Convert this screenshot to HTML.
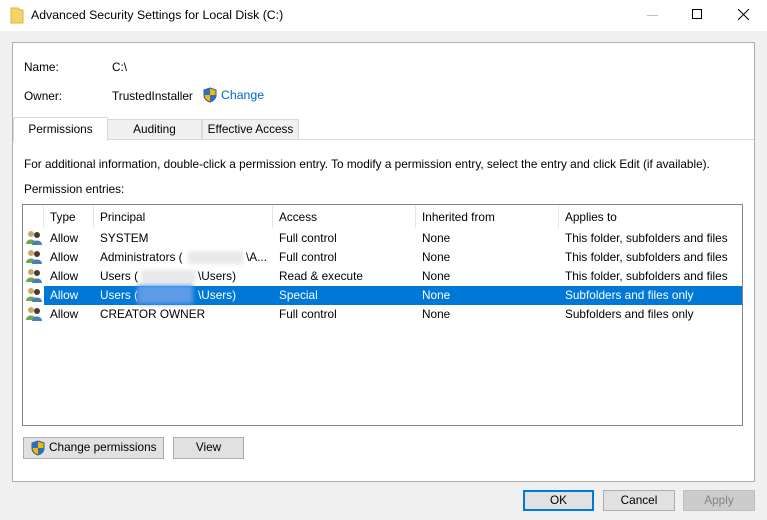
<!DOCTYPE html>
<html><head><style>
*{margin:0;padding:0;box-sizing:border-box}
body{width:767px;height:520px;background:#f0f0f0;font-family:"Liberation Sans",sans-serif;font-size:11.8px;color:#000;position:relative;overflow:hidden}
.a{position:absolute;white-space:nowrap}
.btn{position:absolute;background:#e1e1e1;border:1px solid #adadad;text-align:center;line-height:19px;white-space:nowrap}
.row{position:absolute;left:23px;width:719px;height:19px;line-height:19px;white-space:nowrap}
.row span{position:absolute;white-space:nowrap}
.blur{position:absolute;height:13px;background:#e8e8e8;filter:blur(2px)}
</style></head><body>
<div class="a" style="left:0;top:0;width:767px;height:31px;background:#fff"></div>
<svg class="a" style="left:10px;top:7px" width="14" height="17"><path d="M1 1h7l2 2h3v13H1z" fill="#f6d26b" stroke="#dcb345"/></svg>
<div class="a" style="left:31px;top:8px;font-size:12.3px">Advanced Security Settings for Local Disk (C:)</div>
<div class="a" style="left:647px;top:15px;width:11px;height:1px;background:#c0c0c0"></div>
<div class="a" style="left:692px;top:9px;width:10px;height:10px;border:1px solid #000"></div>
<svg class="a" style="left:738px;top:9px" width="11" height="11"><path d="M0 0L11 11M11 0L0 11" stroke="#000"/></svg>

<div class="a" style="left:12px;top:42px;width:743px;height:440px;background:#fff;border:1px solid #adadad"></div>
<div class="a" style="left:24px;top:60px">Name:</div>
<div class="a" style="left:112px;top:60px">C:\</div>
<div class="a" style="left:24px;top:89px">Owner:</div>
<div class="a" style="left:112px;top:89px">TrustedInstaller</div>
<svg class="a" style="left:203px;top:87px" width="14" height="16"><path d="M7 1L13 3V8C13 12 10 14 7 15C4 14 1 12 1 8V3Z" fill="#f5b800" stroke="#2a5a9a"/><path d="M7 1V8H1V3Z" fill="#2f6fc0"/><path d="M7 8H13C13 12 10 14 7 15Z" fill="#2f6fc0"/></svg>
<div class="a" style="left:221px;top:88px;color:#0066cc;font-size:12.3px">Change</div>

<div class="a" style="left:13px;top:139px;width:741px;height:1px;background:#d9d9d9"></div>
<div class="a" style="left:107px;top:119px;width:95px;height:20px;background:#f0f0f0;border:1px solid #d9d9d9;border-bottom:none;text-align:center;line-height:19px">Auditing</div>
<div class="a" style="left:202px;top:119px;width:97px;height:20px;background:#f0f0f0;border:1px solid #d9d9d9;border-bottom:none;text-align:center;line-height:19px">Effective Access</div>
<div class="a" style="left:13px;top:117px;width:95px;height:24px;background:#fff;border:1px solid #d9d9d9;border-bottom:none;text-align:center;line-height:23px">Permissions</div>

<div class="a" style="left:24px;top:157px">For additional information, double-click a permission entry. To modify a permission entry, select the entry and click Edit (if available).</div>
<div class="a" style="left:24px;top:182px">Permission entries:</div>

<div class="a" style="left:22px;top:204px;width:721px;height:222px;border:1px solid #828790;background:#fff"></div>
<div class="a" style="left:43px;top:205px;width:1px;height:23px;background:#e5e5e5"></div>
<div class="a" style="left:93px;top:205px;width:1px;height:23px;background:#e5e5e5"></div>
<div class="a" style="left:272px;top:205px;width:1px;height:23px;background:#e5e5e5"></div>
<div class="a" style="left:415px;top:205px;width:1px;height:23px;background:#e5e5e5"></div>
<div class="a" style="left:558px;top:205px;width:1px;height:23px;background:#e5e5e5"></div>
<div class="a" style="left:50px;top:210px">Type</div>
<div class="a" style="left:100px;top:210px">Principal</div>
<div class="a" style="left:279px;top:210px">Access</div>
<div class="a" style="left:422px;top:210px">Inherited from</div>
<div class="a" style="left:565px;top:210px">Applies to</div>

<div class="a" style="left:44px;top:286px;width:698px;height:19px;background:#0078d7"></div>

<div class="row" style="top:229px"><span style="left:27px">Allow</span><span style="left:77px">SYSTEM</span><span style="left:256px">Full control</span><span style="left:399px">None</span><span style="left:542px">This folder, subfolders and files</span></div>
<div class="row" style="top:248px"><span style="left:27px">Allow</span><span style="left:77px">Administrators (</span><i class="blur" style="left:165px;top:3px;width:56px"></i><span style="left:223px">\A...</span><span style="left:256px">Full control</span><span style="left:399px">None</span><span style="left:542px">This folder, subfolders and files</span></div>
<div class="row" style="top:267px"><span style="left:27px">Allow</span><span style="left:77px">Users (</span><i class="blur" style="left:118px;top:3px;width:55px"></i><span style="left:175px">\Users)</span><span style="left:256px">Read &amp; execute</span><span style="left:399px">None</span><span style="left:542px">This folder, subfolders and files</span></div>
<div class="row" style="top:286px;color:#fff"><span style="left:27px">Allow</span><span style="left:77px">Users (</span><i class="blur" style="left:114px;top:-1px;width:56px;height:19px;background:#5c9be6"></i><span style="left:175px">\Users)</span><span style="left:256px">Special</span><span style="left:399px">None</span><span style="left:542px">Subfolders and files only</span></div>
<div class="row" style="top:305px"><span style="left:27px">Allow</span><span style="left:77px">CREATOR OWNER</span><span style="left:256px">Full control</span><span style="left:399px">None</span><span style="left:542px">Subfolders and files only</span></div>

<svg class="a" style="left:26px;top:230px" width="17" height="95">
<g id="u"><circle cx="5" cy="4" r="3" fill="#c9a86a"/><path d="M0 14C0 8 10 8 10 14Z" fill="#6aa84f"/><circle cx="11" cy="5" r="3" fill="#4b3a2a"/><path d="M6 15C6 9 16 9 16 15Z" fill="#4a7fb5"/></g>
<use href="#u" y="19"/><use href="#u" y="38"/><use href="#u" y="57"/><use href="#u" y="76"/>
</svg>

<div class="btn" style="left:23px;top:437px;width:141px;height:22px;text-align:left;padding-left:25px">Change permissions</div>
<svg class="a" style="left:31px;top:440px" width="14" height="16"><path d="M7 1L13 3V8C13 12 10 14 7 15C4 14 1 12 1 8V3Z" fill="#f5b800" stroke="#2a5a9a"/><path d="M7 1V8H1V3Z" fill="#2f6fc0"/><path d="M7 8H13C13 12 10 14 7 15Z" fill="#2f6fc0"/></svg>
<div class="btn" style="left:173px;top:437px;width:71px;height:22px">View</div>

<div class="btn" style="left:523px;top:490px;width:71px;height:21px;border:2px solid #0078d7;line-height:17px">OK</div>
<div class="btn" style="left:603px;top:490px;width:72px;height:21px">Cancel</div>
<div class="btn" style="left:683px;top:490px;width:72px;height:21px;background:#cccccc;border-color:#bfbfbf;color:#838383">Apply</div>
</body></html>
